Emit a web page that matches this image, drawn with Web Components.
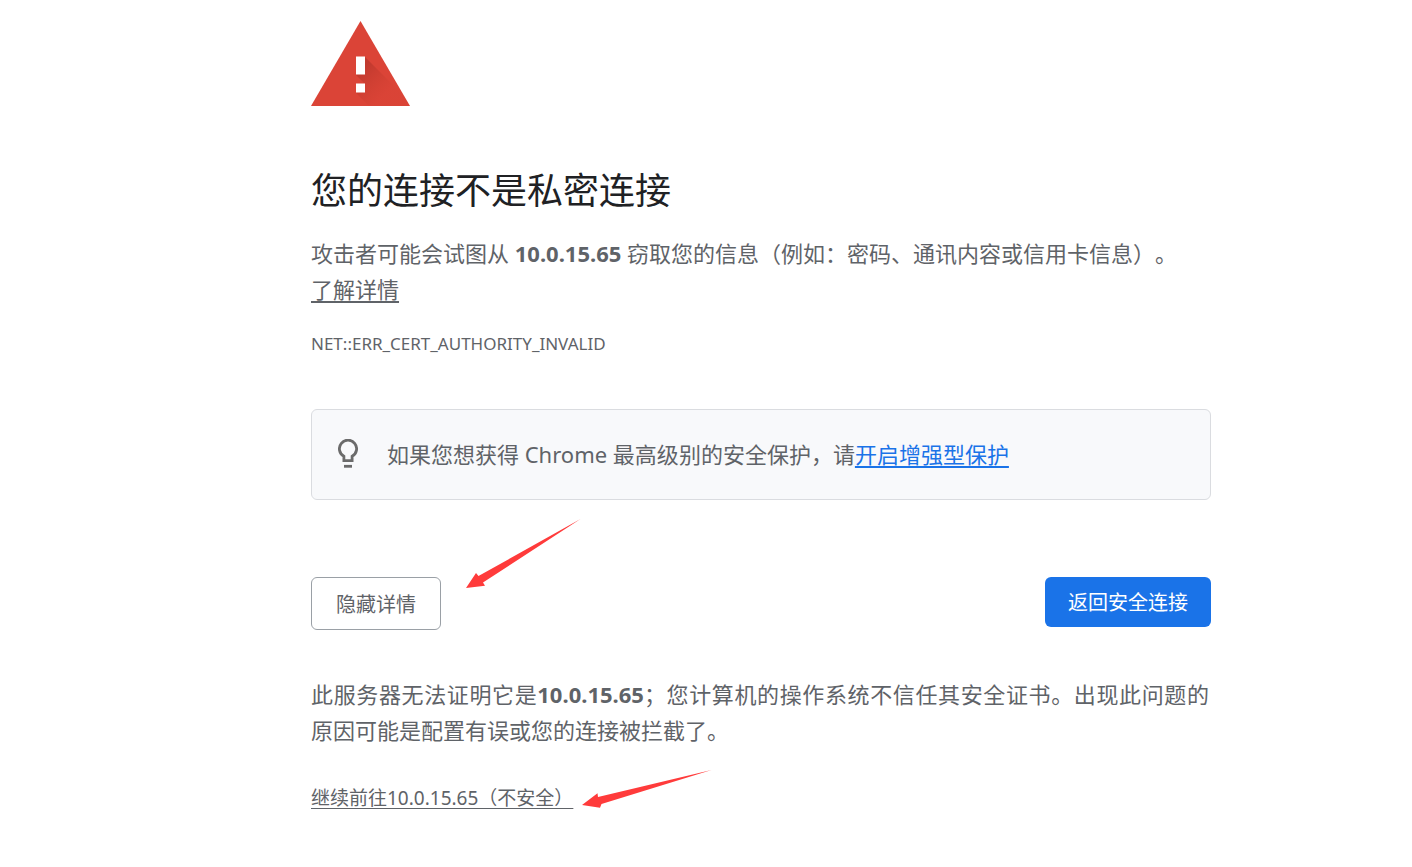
<!DOCTYPE html>
<html lang="zh-CN">
<head>
<meta charset="utf-8">
<meta name="viewport" content="width=device-width, initial-scale=1">
<title>隐私设置错误</title>
<style>
  body {
    margin: 0;
    background: #fff;
    color: #5f6368;
    font-family: "Noto Sans", "Noto Sans CJK SC", sans-serif;
    font-size: 22px;
    line-height: 36px;
    text-spacing-trim: space-all;
  }
</style>
</head>
<body>
<security-page>
  <warning-icon slot="icon"></warning-icon>
  <error-summary host="10.0.15.65" code="NET::ERR_CERT_AUTHORITY_INVALID"></error-summary>
  <protection-tip>如果您想获得 Chrome 最高级别的安全保护，请<a slot="link" href="#enhanced">开启增强型保护</a></protection-tip>
  <action-bar></action-bar>
  <error-details host="10.0.15.65"></error-details>
</security-page>

<script>
  class BaseElement extends HTMLElement {
    connectedCallback() {
      if (this.shadowRoot) return;
      this.attachShadow({ mode: 'open' }).innerHTML = this.render();
    }
  }

  customElements.define('security-page', class extends BaseElement {
    render() {
      return `
        <style>
          :host {
            display: grid;
            grid-template-columns: minmax(16px, 311fr) minmax(0, 900px) minmax(16px, 201fr);
            padding: 20px 0 56px;
          }
          main { grid-column: 2; }
        </style>
        <main><slot name="icon"></slot><slot></slot></main>`;
    }
  });

  customElements.define('warning-icon', class extends BaseElement {
    render() {
      return `
        <style>:host { display: block; } svg { display: block; }</style>
        <svg width="99" height="86" viewBox="0 0 99 86" aria-hidden="true">
          <defs>
            <linearGradient id="shade" gradientUnits="userSpaceOnUse" x1="49" y1="50" x2="74" y2="75">
              <stop offset="0" stop-color="#a52f26" stop-opacity=".5"/>
              <stop offset="1" stop-color="#c53929" stop-opacity=".05"/>
            </linearGradient>
            <clipPath id="tri"><path d="M49.5 1 99 86H0z"/></clipPath>
          </defs>
          <path d="M49.5 1 99 86H0z" fill="#db4437"/>
          <g clip-path="url(#tri)" fill="url(#shade)">
            <path d="M54 37 103 86H76L45 55z"/>
            <path d="M54 64 76 86H58L45 73z"/>
          </g>
          <path d="M45 36.500h9v18h-9zM45 63.500h9v9h-9z" fill="#fff"/>
        </svg>`;
    }
  });

  customElements.define('error-summary', class extends BaseElement {
    render() {
      return `
        <style>
          :host { display: block; padding-top: 61px; }
          h1 { margin: 0 0 20px; font-size: 36px; line-height: 48px; font-weight: 400; color: #202124; }
          p { margin: 0; }
          a { display: inline-block; color: inherit; text-underline-offset: 3px; text-decoration-thickness: 2px; }
          .code { margin-top: 25px; font-size: 17px; line-height: 24px; overflow-wrap: anywhere; }
        </style>
        <h1>您的连接不是私密连接</h1>
        <p>攻击者可能会试图从 <strong>${this.getAttribute('host')}</strong> 窃取您的信息（例如：密码、通讯内容或信用卡信息）。<a href="#learn-more">了解详情</a></p>
        <p class="code">${this.getAttribute('code')}</p>`;
    }
  });

  customElements.define('protection-tip', class extends BaseElement {
    render() {
      return `
        <style>
          :host {
            display: flex;
            align-items: center;
            gap: 29px;
            margin-top: 53px;
            padding: 26px 26px 27px;
            border: 1px solid #dadce0;
            border-radius: 6px;
            background: #f8f9fb;
          }
          svg { flex: none; }
          ::slotted(a) { color: #1a73e8; text-underline-offset: 3px; text-decoration-thickness: 2px; }
        </style>
        <svg width="20" height="30" viewBox="0 0 20 30" fill="none" stroke="#6b6b6b" stroke-width="2.800" aria-hidden="true">
          <path d="M5.900 21.600v-4.300a8.600 8.600 0 1 1 8.200 0v4.300z"/>
          <path d="M6 27.300h8"/>
        </svg>
        <div><slot></slot><slot name="link"></slot></div>`;
    }
  });

  customElements.define('action-bar', class extends BaseElement {
    render() {
      return `
        <style>
          :host {
            position: relative;
            display: flex;
            justify-content: space-between;
            align-items: flex-start;
            margin-top: 77px;
          }
          button {
            margin: 0;
            border: 0;
            border-radius: 6px;
            font: inherit;
            font-size: 20px;
            line-height: 30px;
            cursor: pointer;
          }
          .secondary { padding: 12px 24px 9px; border: 1px solid #9aa0a6; background: #fff; color: #5f6368; }
          .primary { padding: 11px 23px 9px; background: #1a73e8; color: #fff; }
          pointer-arrow { position: absolute; left: 155px; top: -58px; }
        </style>
        <button type="button" class="secondary">隐藏详情</button>
        <button type="button" class="primary">返回安全连接</button>
        <pointer-arrow width="115" height="70" path="M0 69 10 54 12.500 57 114.500 0 17 63.500 19 66.700z"></pointer-arrow>`;
    }
  });

  customElements.define('error-details', class extends BaseElement {
    render() {
      const host = this.getAttribute('host');
      return `
        <style>
          :host { display: block; margin-top: 46px; }
          p { margin: 0; padding-right: 2px; text-align: justify; }
          .proceed { position: relative; margin-top: 38px; font-size: 19px; line-height: 24px; }
          a { color: inherit; text-underline-offset: 3px; text-decoration-thickness: 1px; }
          pointer-arrow { position: absolute; left: 271px; top: -16px; }
        </style>
        <p>此服务器无法证明它是<strong>${host}</strong>；您计算机的操作系统不信任其安全证书。出现此问题的原因可能是配置有误或您的连接被拦截了。</p>
        <div class="proceed">
          <a href="#proceed">继续前往${host}（不安全）</a>
          <pointer-arrow width="130" height="38" path="M0 35 15.500 23.300 16 27 129.500 0 19.500 34 18 37.700z"></pointer-arrow>
        </div>`;
    }
  });

  customElements.define('pointer-arrow', class extends BaseElement {
    render() {
      const w = this.getAttribute('width'), h = this.getAttribute('height');
      return `
        <style>:host { display: block; pointer-events: none; } svg { display: block; }</style>
        <svg width="${w}" height="${h}" viewBox="0 0 ${w} ${h}" aria-hidden="true">
          <path d="${this.getAttribute('path')}" fill="#ff3b3b"/>
        </svg>`;
    }
  });
</script>
</body>
</html>
